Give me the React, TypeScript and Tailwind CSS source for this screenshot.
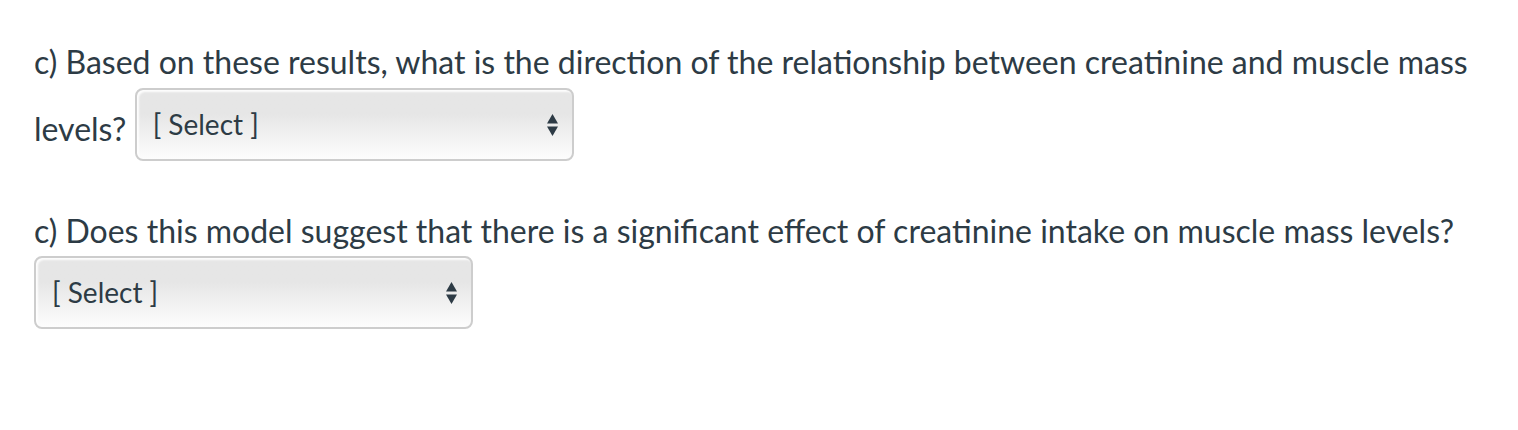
function Arrows() {
  return (
    <svg width="11" height="22" viewBox="0 0 11 22" className="ml-auto shrink-0">
      <path d="M5.5 0 L11 9.5 L0 9.5 Z" fill="#2d3b45" />
      <path d="M0 12.5 L11 12.5 L5.5 22 Z" fill="#2d3b45" />
    </svg>
  )
}

function SelectBox({ className }: { className: string }) {
  return (
    <span
      className={`${className} h-[73px] w-[439px] items-center rounded-lg border-2 border-[#cdcdcd] bg-linear-to-b from-[#e6e6e6] from-35% to-[#fdfdfd] pl-[16px] pr-[14px] text-[28px] leading-[1.2] text-[#2d3b45] shadow-[inset_2px_2px_2px_rgba(255,255,255,0.9)]`}
    >
      <span>[ Select ]</span>
      <Arrows />
    </span>
  )
}

export default function App() {
  return (
    <div className="h-[430px] w-[1518px] bg-white pl-[34px] pr-[30px] pt-[38px] font-['Lato','Liberation_Sans',sans-serif] text-[32px] leading-[1.5] text-[#2d3b45]">
      <p className="mb-[46px]">
        c) Based on these results, what is the direction of the relationship between creatinine and muscle mass levels?{' '}
        <SelectBox className="mt-[2px] inline-flex align-[6px]" />
      </p>
      <p>c) Does this model suggest that there is a significant effect of creatinine intake on muscle mass levels?</p>
      <SelectBox className="mt-[1px] flex" />
    </div>
  )
}
